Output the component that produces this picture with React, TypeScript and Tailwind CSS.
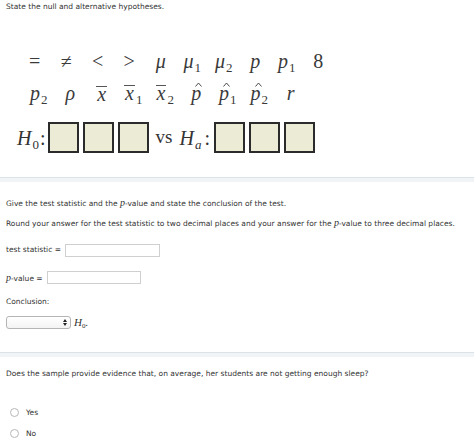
import React from "react";

const serif = "font-['Liberation_Serif','Times_New_Roman',serif]";

function Sub({ children }: { children: React.ReactNode }) {
  return <span className="not-italic text-[13px] relative top-[4px] ml-[1px]">{children}</span>;
}

function Bar({ children }: { children: React.ReactNode }) {
  return <span className="inline-block border-t border-[#555] leading-[14px] px-[1px]">{children}</span>;
}

function Hat({ children }: { children: React.ReactNode }) {
  return (
    <span className="relative inline-block">
      {children}
      <svg className="absolute left-[4px] top-[4px]" width="7" height="5" viewBox="0 0 7 5">
        <path d="M0.5 4.5 L3.5 1 L6.5 4.5" fill="none" stroke="#3a3a3a" strokeWidth="0.9" />
      </svg>
    </span>
  );
}

const rowOne: React.ReactNode[] = [
  <span className="not-italic">=</span>,
  <span className="not-italic">≠</span>,
  <span className="not-italic">&lt;</span>,
  <span className="not-italic">&gt;</span>,
  <span>μ</span>,
  <span>μ<Sub>1</Sub></span>,
  <span>μ<Sub>2</Sub></span>,
  <span>p</span>,
  <span>p<Sub>1</Sub></span>,
  <span className="not-italic">8</span>,
];

const rowTwo: React.ReactNode[] = [
  <span>p<Sub>2</Sub></span>,
  <span>ρ</span>,
  <Bar>x</Bar>,
  <span><Bar>x</Bar><Sub>1</Sub></span>,
  <span><Bar>x</Bar><Sub>2</Sub></span>,
  <Hat>p</Hat>,
  <span><Hat>p</Hat><Sub>1</Sub></span>,
  <span><Hat>p</Hat><Sub>2</Sub></span>,
  <span>r</span>,
];

function Box() {
  return <div className="w-[31px] h-[31px] border-2 border-[#2b2b2b] bg-[#ebebd6]" />;
}

function Separator() {
  return <div className="h-[5px] border-t border-[#dce3e8] bg-[#f1f4f6]" />;
}

function Radio({ label }: { label: string }) {
  return (
    <div className="flex items-center h-[21px] pl-[10px]">
      <span className="w-[9px] h-[9px] rounded-full border border-[#b8b8b8] bg-white" />
      <span className="ml-[7px]">{label}</span>
    </div>
  );
}

export default function App() {
  return (
    <div className="w-[474px] h-[441px] bg-white text-[#333] text-[7.5px] font-['DejaVu_Sans','Verdana',sans-serif] overflow-hidden">
      <div className="pl-[6px] pt-[2px] leading-[10px]">State the null and alternative hypotheses.</div>

      {/* symbol palette */}
      <div className={`${serif} italic text-[20px] text-[#3a3a3a] mt-[33px]`}>
        <div className="flex pl-[19px] h-[32px] items-center">
          {rowOne.map((s, i) => (
            <div key={i} className="w-[31.5px] flex justify-center">{s}</div>
          ))}
        </div>
        <div className="flex pl-[23px] h-[32px] items-center">
          {rowTwo.map((s, i) => (
            <div key={i} className="w-[31.5px] flex justify-center">{s}</div>
          ))}
        </div>
      </div>

      {/* hypotheses */}
      <div className={`${serif} text-[20px] text-[#333] flex items-center mt-[13px] pl-[17px] h-[31px]`}>
        <span className="italic">H<Sub>0</Sub></span>
        <span className="ml-[1px] mr-[2px]">:</span>
        <div className="flex gap-[4px]">
          <Box /><Box /><Box />
        </div>
        <span className="ml-[7px] mr-[7px] text-[19px]">vs</span>
        <span className="italic">H<Sub><span className="italic">a</span></Sub></span>
        <span className="ml-[3px] mr-[4px]">:</span>
        <div className="flex gap-[4px]">
          <Box /><Box /><Box />
        </div>
      </div>

      <div className="mt-[24px]"><Separator /></div>

      <div className="pl-[6px] mt-[16px] leading-[10px]">
        Give the test statistic and the <span className={`${serif} italic text-[10px]`}>p</span>-value and state the conclusion of the test.
      </div>
      <div className="pl-[6px] mt-[9px] leading-[10px]">
        Round your answer for the test statistic to two decimal places and your answer for the <span className={`${serif} italic text-[10px]`}>p</span>-value to three decimal places.
      </div>

      <div className="pl-[6px] mt-[14px] flex items-center h-[14px]">
        <span>test statistic =</span>
        <div className="ml-[4px] w-[95px] h-[13px] border border-[#cfcfcf] bg-white" />
      </div>
      <div className="pl-[6px] mt-[13px] flex items-center h-[14px]">
        <span><span className={`${serif} italic text-[10px]`}>p</span>-value =</span>
        <div className="ml-[4px] w-[94px] h-[13px] border border-[#cfcfcf] bg-white" />
      </div>
      <div className="pl-[6px] mt-[13px] leading-[10px]">Conclusion:</div>

      <div className="pl-[6px] mt-[8px] flex items-center h-[14px]">
        <div className="w-[65px] h-[13px] rounded-[3px] border border-[#b5b5b5] bg-gradient-to-b from-white to-[#f3f3f3] flex items-center justify-end pr-[3px]">
          <svg width="4" height="7" viewBox="0 0 4 7">
            <path d="M0 3 L2 0 L4 3 Z M0 4 L2 7 L4 4 Z" fill="#222" />
          </svg>
        </div>
        <span className={`${serif} italic text-[11px] ml-[3px]`}>
          H<span className="not-italic text-[7px] relative top-[2px]">0</span>.
        </span>
      </div>

      <div className="mt-[23px]"><Separator /></div>

      <div className="pl-[6px] mt-[12px] leading-[10px]">
        Does the sample provide evidence that, on average, her students are not getting enough sleep?
      </div>

      <div className="mt-[23px]">
        <Radio label="Yes" />
        <Radio label="No" />
      </div>
    </div>
  );
}
